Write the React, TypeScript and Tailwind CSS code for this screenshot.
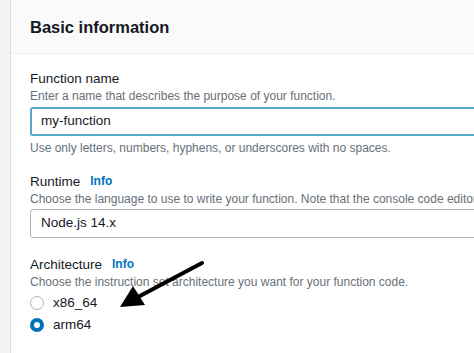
import React from 'react';

const Info = () => <span className="ml-[10px] text-[12px] font-bold text-[#0073bb]">Info</span>;

const Radio: React.FC<{ label: string; checked?: boolean }> = ({ label, checked }) => (
  <div className="flex h-[22px] items-center">
    {checked ? (
      <span className="h-[14px] w-[14px] rounded-full border-[4px] border-[#0073bb] bg-white" />
    ) : (
      <span className="h-[14px] w-[14px] rounded-full border border-[#aab7b8] bg-white" />
    )}
    <span className="ml-[9px] text-[13.5px] text-[#16191f]">{label}</span>
  </div>
);

export default function App() {
  return (
    <div className="relative flex h-[353px] w-[474px] overflow-hidden bg-[#f2f3f3] font-['Liberation_Sans',Arial,sans-serif]">
      <div className="ml-[10px] flex-1 border-l border-[#dcdcdc] bg-white">
        <div className="flex h-[54px] items-center border-b border-[#eaeded] bg-[#fafafa] pl-[19px] pt-[2px]">
          <h2 className="text-[16.5px] font-bold text-[#16191f]">Basic information</h2>
        </div>

        <div className="pl-[19px] pt-[15px] whitespace-nowrap">
          <div className="text-[13.5px] leading-[19px] text-[#16191f]">Function name</div>
          <div className="text-[12px] leading-[16px] text-[#687078]">Enter a name that describes the purpose of your function.</div>
          <div className="mt-[3px] flex h-[29px] w-[480px] items-center rounded-[3px] border-2 border-[#5ba7c9] pl-[9px] text-[13.5px] text-[#16191f]">
            my-function
          </div>
          <div className="mt-[4px] text-[12px] leading-[16px] text-[#687078]">Use only letters, numbers, hyphens, or underscores with no spaces.</div>

          <div className="mt-[16px] flex items-center text-[13.5px] leading-[19px] text-[#16191f]">
            Runtime <Info />
          </div>
          <div className="text-[12px] leading-[16px] text-[#687078]">Choose the language to use to write your function. Note that the console code editor supports</div>
          <div className="mt-[2px] flex h-[29px] w-[480px] items-center rounded-[3px] border border-[#aab7b8] pl-[10px] text-[13.5px] text-[#16191f]">
            Node.js 14.x
          </div>

          <div className="mt-[17px] flex items-center text-[13.5px] leading-[19px] text-[#16191f]">
            Architecture <Info />
          </div>
          <div className="text-[12px] leading-[16px] text-[#687078]">Choose the instruction set architecture you want for your function code.</div>
          <div className="mt-[2px]">
            <Radio label="x86_64" />
            <Radio label="arm64" checked />
          </div>
        </div>
      </div>

      <svg className="absolute left-0 top-0" width="474" height="353" viewBox="0 0 474 353">
        <line x1="202" y1="263" x2="138" y2="297" stroke="#000" strokeWidth="4" strokeLinecap="round" />
        <polygon points="120,307 133,286 145,305" fill="#000" />
      </svg>
    </div>
  );
}
